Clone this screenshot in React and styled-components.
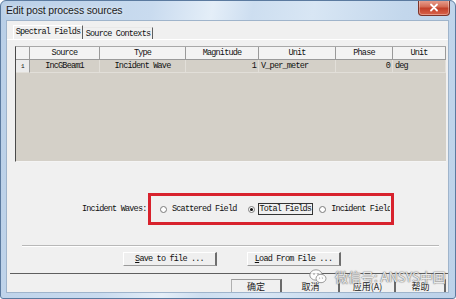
import React from "react";
import styled, { createGlobalStyle } from "styled-components";

const Global = createGlobalStyle`
  html, body { margin: 0; padding: 0; width: 456px; height: 299px; overflow: hidden; background: #fff; }
  * { box-sizing: border-box; }
`;

const MONO = `"Liberation Mono", "DejaVu Sans Mono", monospace`;
const CJK = `"Noto Sans CJK SC", "Noto Sans", sans-serif`;

const Window = styled.div`
  position: relative;
  width: 456px;
  height: 299px;
  border: 1px solid #5b7a9f;
  border-radius: 6px 6px 3px 3px;
  background: linear-gradient(100deg, #b9cfe7 0%, #c9dbef 30%, #e4eef8 42%, #cddef0 50%, #d8e6f4 62%, #c3d7ec 80%, #bdd2e9 100%);
  display: flex;
  flex-direction: column;
  overflow: hidden;
`;

const TitleBar = styled.div`
  height: 19px;
  flex: none;
  display: flex;
  justify-content: space-between;
  align-items: flex-start;
  padding-left: 5px;
`;

const Title = styled.div`
  font-family: "Liberation Sans", Arial, sans-serif;
  font-size: 10.5px;
  letter-spacing: -0.15px;
  color: #1b1b1b;
  line-height: 19px;
  text-shadow: 0 0 4px rgba(255,255,255,0.9);
`;

const CloseButton = styled.div`
  width: 32px;
  height: 16px;
  margin-right: 5px;
  margin-top: -1px;
  border: 1px solid #7d3328;
  border-top: none;
  border-radius: 0 0 4px 4px;
  background: linear-gradient(#e9a595 0%, #d46b55 45%, #c2402a 55%, #d9634a 100%);
  display: flex;
  align-items: center;
  justify-content: center;
  box-shadow: inset 0 0 0 1px rgba(255,255,255,0.35);
`;

const Client = styled.div`
  flex: 1;
  margin: 0 6px 5px 5px;
  background: #f0f0f0;
  border: 1px solid #9fb4cb;
  display: flex;
  flex-direction: column;
  overflow: hidden;
  font-family: ${MONO};
  font-size: 8.5px;
  letter-spacing: -0.8px;
  color: #111;
`;

const TabStrip = styled.div`
  height: 19px;
  flex: none;
  display: flex;
  align-items: flex-end;
  padding-left: 6px;
  border-bottom: 1px solid #ffffff;
`;

const Tab = styled.div`
  width: 70px;
  height: ${p => (p.$active ? "14px" : "12px")};
  display: flex;
  align-items: center;
  justify-content: center;
  border-top: 1px solid ${p => (p.$active ? "#ffffff" : "#e8e8e8")};
  border-left: 1px solid ${p => (p.$active ? "#ffffff" : "transparent")};
  border-right: 1px solid #5e5e5e;
  padding-bottom: ${p => (p.$active ? "2px" : "0")};
`;

const PanelBody = styled.div`
  padding: 6px 0 0 8px;
  flex: none;
`;

const Grid = styled.div`
  width: 431px;
  height: 116px;
  background: #d4d0c8;
  border-left: 1px solid #4a4a4a;
  border-top: 1px solid #a8a8a8;
  border-bottom: 1px solid #f4f4f4;
  display: grid;
  grid-template-columns: 14px 70px 86px 73px 77px 57px 53px;
  grid-template-rows: 13px 13px;
  align-content: start;
`;

const HeadCell = styled.div`
  background: #f3f3f3;
  border-right: 1px solid #9a9a9a;
  border-bottom: 1px solid #9a9a9a;
  display: flex;
  align-items: center;
  justify-content: center;
  white-space: nowrap;
`;

const Cell = styled.div`
  background: ${p => (p.$rowHead ? "#ebebeb" : "#d4d0c8")};
  border-right: 1px solid ${p => (p.$rowHead ? "#9a9a9a" : "#e2dfd9")};
  border-bottom: 1px solid #e2dfd9;
  display: flex;
  align-items: center;
  justify-content: ${p => p.$align || "center"};
  padding: 0 2px;
  white-space: nowrap;
  font-size: ${p => (p.$rowHead ? "6px" : "8.5px")};
`;

const RadioRow = styled.div`
  margin-top: 31px;
  padding-left: 75px;
  height: 32px;
  flex: none;
  display: flex;
  align-items: center;
`;

const FieldLabel = styled.div`
  width: 66px;
  white-space: nowrap;
`;

const RedBox = styled.div`
  width: 246px;
  height: 32px;
  border: 3px solid #d8222d;
  display: flex;
  align-items: center;
  padding-left: 9px;
  overflow: hidden;
`;

const Radio = styled.div`
  display: flex;
  align-items: center;
  gap: 3px;
  margin-right: ${p => p.$mr || "9px"};
  white-space: nowrap;
`;

const Circle = styled.span`
  width: 7px;
  height: 7px;
  border-radius: 50%;
  border: 1px solid #7a7a7a;
  background: #fff;
  display: flex;
  align-items: center;
  justify-content: center;
  flex: none;
  &::after {
    content: "";
    display: ${p => (p.$checked ? "block" : "none")};
    width: 3px;
    height: 3px;
    border-radius: 50%;
    background: #111;
  }
`;

const RadioText = styled.span`
  display: block;
  padding: 0 1px;
  border: 1px solid ${p => (p.$focus ? "#333" : "transparent")};
  line-height: 10px;
  overflow: hidden;
  max-width: ${p => p.$clip || "none"};
`;

const Separator = styled.div`
  margin: 20px 0 0 15px;
  width: 417px;
  height: 2px;
  border-top: 1px solid #b8b8b8;
  border-bottom: 1px solid #ffffff;
  flex: none;
`;

const ButtonRow = styled.div`
  margin-top: 5px;
  padding-left: 116px;
  display: flex;
  gap: 30px;
  flex: none;
`;

const Button = styled.div`
  width: 94px;
  height: 14px;
  background: #efefef;
  border-top: 1px solid #ffffff;
  border-left: 1px solid #ffffff;
  border-right: 2px solid #6e6e6e;
  border-bottom: 1px solid #9a9a9a;
  display: flex;
  align-items: center;
  justify-content: center;
  white-space: nowrap;
  & u { text-decoration: underline; }
`;

const DarkLine = styled.div`
  margin: 7px 0 0 3px;
  height: 1px;
  background: #5f5f5f;
  flex: none;
`;

const BottomRow = styled.div`
  margin-top: 5px;
  padding-left: 224px;
  display: flex;
  height: 13px;
  flex: none;
`;

const DlgButton = styled.div`
  width: ${p => p.$w}px;
  height: 13px;
  border-top: 1px solid ${p => (p.$first ? "#9a9a9a" : "transparent")};
  border-left: 1px solid ${p => (p.$first ? "#b0b0b0" : "transparent")};
  border-right: 2px solid #6a6a6a;
  display: flex;
  align-items: flex-end;
  justify-content: center;
  font-family: ${CJK};
  font-size: 9px;
  letter-spacing: 0;
  line-height: 10px;
  color: #222;
  white-space: nowrap;
`;

const Watermark = styled.div`
  position: absolute;
  left: 308px;
  top: 268px;
  display: flex;
  align-items: center;
  gap: 8px;
  font-family: ${CJK};
  font-size: 13px;
  line-height: 15px;
  color: rgba(255,255,255,0.85);
  text-shadow: 0 0 1px #777, 0 0 1px #777, 0 0 2px rgba(0,0,0,0.35);
  white-space: nowrap;
  opacity: 0.95;
`;

const cols = ["Source", "Type", "Magnitude", "Unit", "Phase", "Unit"];

export default function App() {
  return (
    <>
      <Global />
      <Window>
        <TitleBar>
          <Title>Edit post process sources</Title>
          <CloseButton>
            <svg width="10" height="9" viewBox="0 0 10 9">
              <path d="M2 1.5 L8 7.5 M8 1.5 L2 7.5" stroke="#ffffff" strokeWidth="1.8" strokeLinecap="round" />
            </svg>
          </CloseButton>
        </TitleBar>
        <Client>
          <TabStrip>
            <Tab $active>Spectral Fields</Tab>
            <Tab>Source Contexts</Tab>
          </TabStrip>
          <PanelBody>
            <Grid>
              <HeadCell />
              {cols.map((c, i) => (
                <HeadCell key={i}>{c}</HeadCell>
              ))}
              <Cell $rowHead>1</Cell>
              <Cell>IncGBeam1</Cell>
              <Cell>Incident Wave</Cell>
              <Cell $align="flex-end">1</Cell>
              <Cell $align="flex-start">V_per_meter</Cell>
              <Cell $align="flex-end">0</Cell>
              <Cell $align="flex-start">deg</Cell>
            </Grid>
          </PanelBody>
          <RadioRow>
            <FieldLabel>Incident Waves:</FieldLabel>
            <RedBox>
              <Radio>
                <Circle />
                <RadioText>Scattered Field</RadioText>
              </Radio>
              <Radio $mr="6px">
                <Circle $checked />
                <RadioText $focus>Total Fields</RadioText>
              </Radio>
              <Radio $mr="0">
                <Circle />
                <RadioText $clip="62px">Incident Field</RadioText>
              </Radio>
            </RedBox>
          </RadioRow>
          <Separator />
          <ButtonRow>
            <Button><span><u>S</u>ave to file ...</span></Button>
            <Button><span><u>L</u>oad From File ...</span></Button>
          </ButtonRow>
          <DarkLine />
          <BottomRow>
            <DlgButton $w={51} $first>确定</DlgButton>
            <DlgButton $w={58}>取消</DlgButton>
            <DlgButton $w={56}>应用(A)</DlgButton>
            <DlgButton $w={50}>帮助</DlgButton>
          </BottomRow>
        </Client>
        <Watermark>
          <svg width="18" height="15" viewBox="0 0 18 15">
            <ellipse cx="7" cy="6" rx="6.2" ry="5.2" fill="rgba(255,255,255,0.9)" stroke="#8a8a8a" strokeWidth="0.9" />
            <ellipse cx="12" cy="9.5" rx="5" ry="4.2" fill="rgba(255,255,255,0.9)" stroke="#8a8a8a" strokeWidth="0.9" />
            <circle cx="5" cy="5" r="0.8" fill="#8a8a8a" />
            <circle cx="9" cy="5" r="0.8" fill="#8a8a8a" />
            <circle cx="10.5" cy="9" r="0.6" fill="#8a8a8a" />
            <circle cx="13.5" cy="9" r="0.6" fill="#8a8a8a" />
          </svg>
          <span>微信号: ANSYS中国</span>
        </Watermark>
      </Window>
    </>
  );
}
